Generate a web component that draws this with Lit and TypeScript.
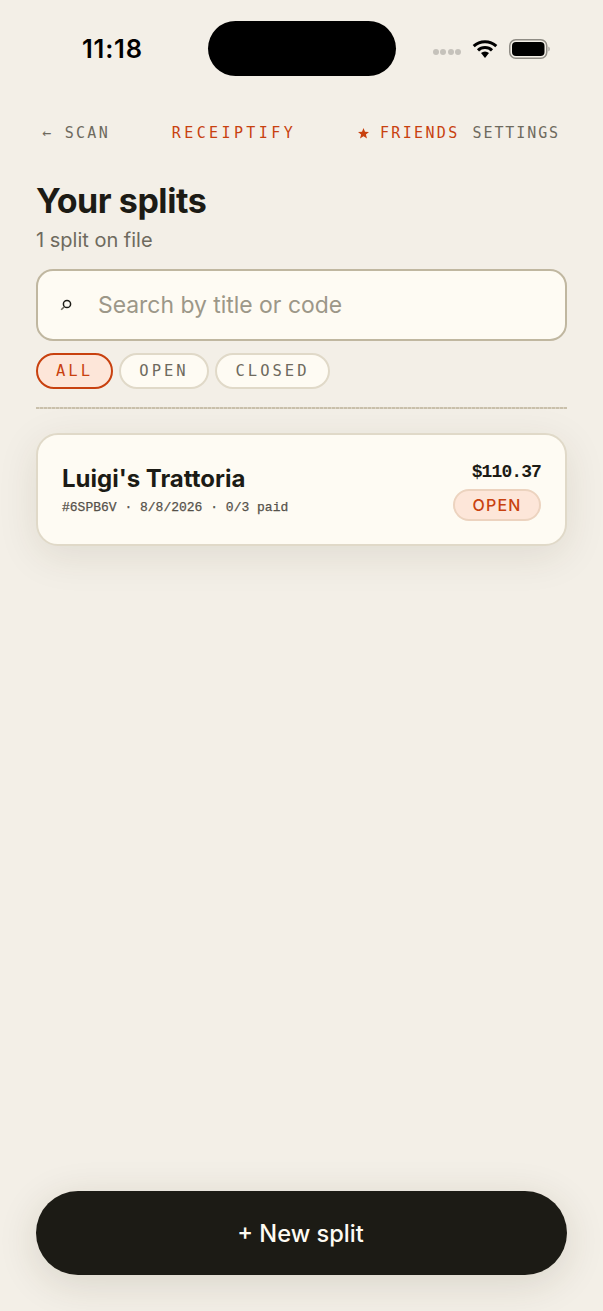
import { LitElement, html, css } from "lit";
import { customElement } from "lit/decorators.js";

@customElement("app-root")
export class AppRoot extends LitElement {
  static styles = css`
    :host { display: block; }
    * { box-sizing: border-box; }
    .page {
      position: relative; height: 1311px; overflow: hidden; background: #f3efe7;
      font-family: Inter, sans-serif; color: #1c1b15;
      display: flex; flex-direction: column; padding: 0 36px 36px;
    }
    .status { height: 98px; display: flex; align-items: center; justify-content: space-between; padding: 0 17px 0 46px; }
    .time { font-size: 25.5px; font-weight: 600; color: #000; line-height: 1; letter-spacing: 0.8px; }
    .island { position: absolute; left: 208px; top: 21px; width: 188px; height: 55px; border-radius: 28px; background: #000; }
    .sys { display: flex; align-items: center; gap: 11px; margin-top: -1px; }
    .dots { display: flex; gap: 1.4px; margin-top: 7px; }
    .dots i { width: 6px; height: 6px; border-radius: 50%; background: #c5c2bb; display: block; }
    .nav {
      height: 18px; margin-top: 26px; display: flex; align-items: center; justify-content: space-between;
      font-family: "DejaVu Sans Mono", monospace; font-size: 15px; line-height: 18px;
      color: #6e6a5e; padding: 0 7px 0 6px; white-space: nowrap;
    }
    .left { letter-spacing: 2.3px; }
    .brand { color: #c8410f; letter-spacing: 3.4px; }
    .right { display: flex; gap: 13px; letter-spacing: 1.9px; }
    .friends { color: #c8410f; letter-spacing: 2.35px; display: flex; align-items: center; }
    .star { display: block; width: 11px; height: 11px; margin-right: 11px; fill: #c8410f; }
    h1 { margin: 37px 0 0; font-size: 34px; line-height: 44px; font-weight: 700; letter-spacing: -0.45px; }
    .sub { font-size: 20px; line-height: 24px; color: #6e6a5e; margin-top: 5px; }
    .search {
      margin-top: 17px; height: 72px; border: 2px solid #c0b7a0; border-radius: 17px; background: #fefbf3;
      display: flex; align-items: center; padding-left: 21px;
    }
    .search svg { width: 14px; height: 14px; display: block; }
    .search span { margin-left: 25px; font-size: 22.9px; color: #9c9788; }
    .chips { display: flex; gap: 6px; margin-top: 12px; }
    .chip {
      height: 36px; border: 2px solid #e0d9c8; border-radius: 18px; background: #fefbf3;
      display: flex; align-items: center; justify-content: center;
      font-family: "DejaVu Sans Mono", monospace; font-size: 15.5px; letter-spacing: 3px; color: #6e6a5e;
    }
    .chip.on { background: #fde6d9; border-color: #c8410f; color: #c8410f; }
    .c1 { width: 77px; } .c2 { width: 90px; } .c3 { width: 115px; }
    .rule { margin-top: 18px; height: 2px; background: repeating-linear-gradient(90deg, #c9c0ab 0 3px, #dcd5c5 3px 4px); }
    .card {
      margin-top: 24px; height: 113px; border: 2px solid #e0d9c8; border-radius: 22px; background: #fefbf3;
      box-shadow: 0 10px 40px rgba(60, 50, 20, 0.1);
      display: flex; justify-content: space-between; padding: 27px 24px 0;
    }
    .name { font-size: 24px; line-height: 34px; font-weight: 700; }
    .meta { font-family: "Liberation Mono", monospace; font-size: 13px; line-height: 18px; color: #55514a; margin-top: 3px; -webkit-text-stroke: 0.25px #55514a; }
    .end { display: flex; flex-direction: column; align-items: flex-end; }
    .price { font-family: "Liberation Mono", monospace; font-size: 18px; line-height: 24px; font-weight: 700; margin-top: -2px; letter-spacing: -0.9px; }
    .badge {
      margin-top: 5px; width: 88px; height: 32px; border: 2px solid #ecd3bf; border-radius: 16px; background: #fde6d9;
      display: flex; align-items: center; justify-content: center;
      font-size: 16px; font-weight: 500; color: #c8410f; letter-spacing: 1.2px;
    }
    .new {
      margin-top: auto; height: 84px; border-radius: 42px; background: #1c1b15; color: #fefbf3;
      box-shadow: 0 8px 40px rgba(60, 50, 20, 0.14);
      display: flex; align-items: center; justify-content: center; padding-right: 2px;
      font-size: 23.6px; font-weight: 500;
    }
  `;

  render() {
    return html`
      <div class="page">
        <div class="status">
          <span class="time">11:18</span>
          <div class="island"></div>
          <div class="sys">
            <div class="dots"><i></i><i></i><i></i><i></i></div>
            <svg width="26" height="20" viewBox="0 0 26 20">
              <path d="M1.7 7.2 A16.5 16.5 0 0 1 24.3 7.2" fill="none" stroke="#000" stroke-width="3"/>
              <path d="M6 11.4 A10 10 0 0 1 20 11.4" fill="none" stroke="#000" stroke-width="3"/>
              <path d="M9 14 A6 6 0 0 1 17 14 L13 19 Z" fill="#000"/>
            </svg>
            <svg width="41" height="20" viewBox="0 0 41 20">
              <rect x="0.75" y="0.75" width="37" height="18.5" rx="6" fill="none" stroke="#8f8c85" stroke-width="1.5"/>
              <rect x="3" y="3" width="32.5" height="14" rx="4" fill="#000"/>
              <path d="M39.5 7.5 C41 8.3 41 11.7 39.5 12.5 Z" fill="#8f8c85"/>
            </svg>
          </div>
        </div>
        <nav class="nav">
          <span class="left">← SCAN</span>
          <span class="brand">RECEIPTIFY</span>
          <span class="right">
            <span class="friends"><svg class="star" viewBox="0 0 11 11"><path d="M5.5 0 L7 3.8 L11 4 L7.9 6.5 L9 10.6 L5.5 8.3 L2 10.6 L3.1 6.5 L0 4 L4 3.8 Z"/></svg>FRIENDS</span>
            <span>SETTINGS</span>
          </span>
        </nav>
        <h1>Your splits</h1>
        <div class="sub">1 split on file</div>
        <div class="search">
          <svg viewBox="0 0 14 14"><circle cx="8" cy="6" r="3.6" fill="none" stroke="#1c1b15" stroke-width="1.5"/><path d="M5.3 8.8 L2.2 11.8" stroke="#6e6a5e" stroke-width="1.6"/></svg>
          <span>Search by title or code</span>
        </div>
        <div class="chips">
          <div class="chip on c1">ALL</div>
          <div class="chip c2">OPEN</div>
          <div class="chip c3">CLOSED</div>
        </div>
        <div class="rule"></div>
        <div class="card">
          <div>
            <div class="name">Luigi's Trattoria</div>
            <div class="meta">#6SPB6V · 8/8/2026 · 0/3 paid</div>
          </div>
          <div class="end">
            <div class="price">$110.37</div>
            <div class="badge">OPEN</div>
          </div>
        </div>
        <div class="new">+ New split</div>
      </div>
    `;
  }
}
